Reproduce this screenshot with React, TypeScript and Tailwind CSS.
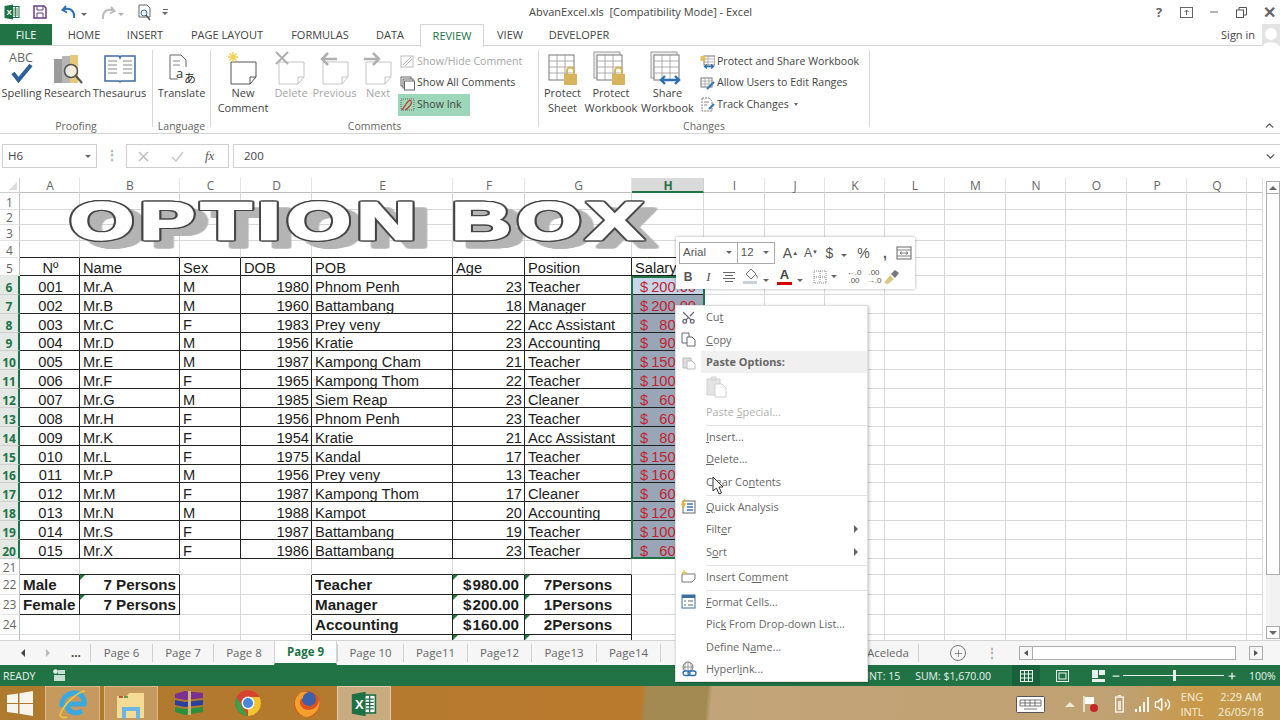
import { ReactNode } from "react";
import { Scissors, ChevronUp, ChevronDown, Plus, Minus, Volume2 } from "lucide-react";

const people: [string, string, string, number, string, number, string, number][] = [
  ["001", "Mr.A", "M", 1980, "Phnom Penh", 23, "Teacher", 200],
  ["002", "Mr.B", "M", 1960, "Battambang", 18, "Manager", 200],
  ["003", "Mr.C", "F", 1983, "Prey veny", 22, "Acc Assistant", 80],
  ["004", "Mr.D", "M", 1956, "Kratie", 23, "Accounting", 90],
  ["005", "Mr.E", "M", 1987, "Kampong Cham", 21, "Teacher", 150],
  ["006", "Mr.F", "F", 1965, "Kampong Thom", 22, "Teacher", 100],
  ["007", "Mr.G", "M", 1985, "Siem Reap", 23, "Cleaner", 60],
  ["008", "Mr.H", "F", 1956, "Phnom Penh", 23, "Teacher", 60],
  ["009", "Mr.K", "F", 1954, "Kratie", 21, "Acc Assistant", 80],
  ["010", "Mr.L", "F", 1975, "Kandal", 17, "Teacher", 150],
  ["011", "Mr.P", "M", 1956, "Prey veny", 13, "Teacher", 160],
  ["012", "Mr.M", "F", 1987, "Kampong Thom", 17, "Cleaner", 60],
  ["013", "Mr.N", "M", 1988, "Kampot", 20, "Accounting", 120],
  ["014", "Mr.S", "F", 1987, "Battambang", 19, "Teacher", 100],
  ["015", "Mr.X", "F", 1986, "Battambang", 23, "Teacher", 60],
];

const headers = ["Nº", "Name", "Sex", "DOB", "POB", "Age", "Position", "Salary"];
const columns = ["A", "B", "C", "D", "E", "F", "G", "H", "I", "J", "K", "L", "M", "N", "O", "P", "Q", ""];
const rowNumbers = Array.from({ length: 25 }, (_, i) => i + 1);

const totals: Record<number, [string, string, string]> = {
  22: ["Teacher", "$ 980.00", "7Persons"],
  23: ["Manager", "$ 200.00", "1Persons"],
  24: ["Accounting", "$ 160.00", "2Persons"],
};

function inBox(r: number, c: number) {
  if (r >= 5 && r <= 20 && c <= 7) return true;
  if ((r === 22 || r === 23) && c <= 1) return true;
  if (r >= 22 && r <= 25 && c >= 4 && c <= 6) return true;
  return false;
}

const Corner = () => (
  <span className="absolute left-0 top-0 w-[5px] h-[5px] bg-[#1f7a3c] [clip-path:polygon(0_0,100%_0,0_100%)]" />
);

function Cell({ r, c }: { r: number; c: number }) {
  const right = inBox(r, c) || inBox(r, c + 1);
  const bottom = inBox(r, c) || inBox(r + 1, c);
  let body: ReactNode = null;
  let align = "pl-[3px]";
  let extra = "";

  if (r === 5 && c <= 7) {
    body = headers[c];
    if (c === 0) align = "justify-center pl-[2px]";
  }
  if (r >= 6 && r <= 20 && c <= 7) {
    const p = people[r - 6];
    if (c === 0) align = "justify-center pl-[2px]";
    if (c === 3 || c === 5) align = "justify-end pr-[2px]";
    if (c === 7) {
      align = "justify-between pl-[8px] pr-[7px]";
      extra = (r === 6 ? "bg-[#c6d7ec]" : "bg-[#98a6b8]") + " text-[#c41f2e]";
      body = (
        <>
          <span>$</span>
          <span>{p[7]}.00</span>
        </>
      );
    } else {
      body = p[c];
    }
  }
  if ((r === 22 || r === 23) && c === 0) {
    body = r === 22 ? "Male" : "Female";
    extra = "font-bold text-[15.2px]";
  }
  if ((r === 22 || r === 23) && c === 1) {
    body = (
      <>
        <Corner />7 Persons
      </>
    );
    align = "justify-end pr-[3px]";
    extra = "font-bold text-[15.2px]";
  }
  if (r === 25 && (c === 5 || c === 6)) body = <Corner />;
  if (totals[r] && c >= 4 && c <= 6) {
    extra = "font-bold text-[15.2px]";
    body = totals[r][c - 4];
    if (c === 5) {
      body = (
        <>
          <Corner />
          <span className="[word-spacing:-3px]">{body}</span>
        </>
      );
      align = "justify-end pr-[5px]";
    }
    if (c === 6) {
      body = (
        <>
          <Corner />
          {body}
        </>
      );
      align = "justify-center";
    }
  }

  return (
    <div
      className={`relative flex whitespace-nowrap border-r border-b text-[14.67px] leading-[14px] text-[#1d1d1d] font-['Liberation_Sans',sans-serif] ${
        r >= 22 ? "items-center pt-[2px]" : "items-end"
      } ${right ? "border-r-[#222]" : "border-r-[#d8d8d8]"} ${bottom ? "border-b-[#222]" : "border-b-[#d8d8d8]"} ${align} ${extra}`}
    >
      {body}
    </div>
  );
}

// ---- small drawn icons ----

const ExcelLogo = ({ size = 16 }: { size?: number }) => (
  <svg width={size} height={size} viewBox="0 0 16 16">
    <rect x="7" y="2.5" width="8" height="11" fill="#fff" stroke="#1e7145" />
    <path d="M9 5h5M9 7h5M9 9h5M9 11h5M11.5 3v10" stroke="#1e7145" strokeWidth="0.8" />
    <path d="M0.5 2 9 0.5v15L0.5 14z" fill="#1e7145" />
    <text x="2.4" y="11" fontSize="8" fontWeight="700" fill="#fff" fontFamily="Liberation Sans">X</text>
  </svg>
);

const Note = ({ color = "#555", children }: { color?: string; children?: ReactNode }) => (
  <svg width="36" height="36" viewBox="0 0 36 36" fill="none">
    <path d="M6 12h25v15l-6 7H6z" fill="#fff" stroke={color} />
    <path d="M31 27h-6v7" stroke={color} />
    {children}
  </svg>
);

const SheetLock = ({ share, back }: { share?: boolean; back?: boolean }) => (
  <svg width="36" height="36" viewBox="0 0 36 36" fill="none">
    {back && <rect x="1" y="2" width="26" height="26" fill="#eee" stroke="#999" />}
    <rect x="4" y="5" width="25" height="25" fill="#fff" stroke="#777" />
    <path d="M4 11h25M4 17h25M4 23h25M12 5v25M20 5v25" stroke="#999" strokeWidth="0.8" />
    {share ? (
      <path d="M12 30h16M15 26l-4 4 4 4M25 26l4 4-4 4" stroke="#2f6fb0" strokeWidth="2.4" />
    ) : (
      <>
        <rect x="19" y="24" width="13" height="11" fill="#d9b35c" />
        <path d="M22 24v-3a3.5 3.5 0 0 1 7 0v3" stroke="#d9b35c" strokeWidth="2" />
      </>
    )}
  </svg>
);

function SmallGlyph({ kind }: { kind: string }) {
  if (kind === "hide")
    return (
      <svg width="15" height="15" viewBox="0 0 15 15" fill="none" stroke="#bbb">
        <rect x="1" y="2" width="12" height="11" />
        <path d="M3 11l8-8M5 12l7-7" />
      </svg>
    );
  if (kind === "all")
    return (
      <svg width="15" height="15" viewBox="0 0 15 15" fill="#fff" stroke="#666">
        <rect x="1" y="1" width="10" height="9" />
        <rect x="3" y="3" width="10" height="9" />
        <rect x="4.5" y="5" width="10" height="9" />
      </svg>
    );
  if (kind === "ink")
    return (
      <svg width="15" height="15" viewBox="0 0 15 15" fill="none">
        <rect x="1" y="2" width="13" height="11" stroke="#666" strokeDasharray="1 1" />
        <path d="M2 13C5 9 9 1 11 4s-4 8-6 9" stroke="#c0392b" strokeWidth="1.2" />
      </svg>
    );
  if (kind === "share")
    return (
      <svg width="15" height="15" viewBox="0 0 15 15" fill="none">
        <rect x="4" y="2" width="11" height="9" fill="#fff" stroke="#777" />
        <path d="M4 5h11M4 8h11M8 2v9" stroke="#999" strokeWidth="0.7" />
        <rect x="0.5" y="2" width="5" height="5" fill="#e2bf64" />
        <path d="M5 12.5h8M7 10.5l-2.5 2 2.5 2M11 10.5l2.5 2-2.5 2" stroke="#2f6fb0" strokeWidth="1.3" />
      </svg>
    );
  if (kind === "edit")
    return (
      <svg width="15" height="15" viewBox="0 0 15 15" fill="none">
        <rect x="1" y="2" width="11" height="9" fill="#fff" stroke="#777" />
        <path d="M1 5h11M1 8h11M5 2v9M9 2v9" stroke="#999" strokeWidth="0.7" />
        <path d="M14 6l-7 7" stroke="#3c78b4" strokeWidth="2.2" />
      </svg>
    );
  return (
    <svg width="15" height="15" viewBox="0 0 15 15" fill="none">
      <path d="M2 1h7l3 3v10H2z" fill="#fff" stroke="#777" strokeDasharray="2 1" />
      <path d="M4 5h5M4 8h3" stroke="#888" />
      <path d="M14 7l-5 5" stroke="#3c78b4" strokeWidth="2.2" />
    </svg>
  );
}

// ---- ribbon parts ----

function BigBtn({ w, label, icon, off }: { w: number; label: ReactNode; icon: ReactNode; off?: boolean }) {
  return (
    <div
      style={{ width: w }}
      className={`flex flex-col items-center text-center leading-[15px] ${off ? "text-[#a6a6a6]" : "text-[#444]"}`}
    >
      <div className="h-[35px] flex items-center justify-center">{icon}</div>
      <div>{label}</div>
    </div>
  );
}

function SmallBtn({ kind, label, off, active, caret }: { kind: string; label: string; off?: boolean; active?: boolean; caret?: boolean }) {
  return (
    <div
      className={`h-[21.5px] flex items-center gap-[2px] pl-[2px] whitespace-nowrap text-[10.6px] ${off ? "text-[#a6a6a6]" : "text-[#444]"} ${
        active ? "bg-[#9dd6b9] w-[72px]" : ""
      }`}
    >
      <SmallGlyph kind={kind} />
      {label}
      {caret && <span className="ml-[3px] w-0 h-0 border-x-[2.5px] border-x-transparent border-t-[3px] border-t-[#666]" />}
    </div>
  );
}

function Group({ w, label, children }: { w: number; label: string; children: ReactNode }) {
  return (
    <div style={{ width: w }} className="flex flex-col h-[77px] mt-[4px] border-r border-[#d8d8d8]">
      <div className="flex h-[69px] shrink-0">{children}</div>
      <div className="shrink-0 text-center text-[10.5px] leading-[14px] text-[#666] whitespace-nowrap">{label}</div>
    </div>
  );
}

function Ribbon() {
  return (
    <div className="h-[88px] flex border-b border-[#d4d4d4] text-[11px] shrink-0 relative">
      <Group w={153} label="Proofing">
        <BigBtn
          w={43}
          label="Spelling"
          icon={
            <svg width="34" height="35" viewBox="0 0 34 35" fill="none">
              <text x="4" y="12" fontSize="12.5" fill="#666" fontFamily="Open Sans">ABC</text>
              <path d="M8 23l5.500 7L26 15" stroke="#2c5f9e" strokeWidth="4" />
            </svg>
          }
        />
        <BigBtn
          w={49}
          label="Research"
          icon={
            <svg width="34" height="35" viewBox="0 0 34 35" fill="none">
              <rect x="3" y="9" width="8" height="24" fill="#9b9b9b" />
              <rect x="11" y="6" width="8" height="27" fill="#b5b5b5" />
              <rect x="19" y="5" width="8" height="28" fill="#e7c77a" />
              <circle cx="20" cy="21" r="6.5" fill="#fff" fillOpacity=".7" stroke="#555" strokeWidth="1.6" />
              <path d="M25 26l6 7" stroke="#555" strokeWidth="2.2" />
            </svg>
          }
        />
        <BigBtn
          w={55}
          label="Thesaurus"
          icon={
            <svg width="32" height="35" viewBox="0 0 32 35" fill="none">
              <path d="M1 6h14l1 2 1-2h14v25H17l-1 1-1-1H1z" fill="#fff" stroke="#3e6e9f" strokeWidth="1.5" />
              <path d="M4 11h9M4 15h9M4 19h9M4 23h9M19 11h9M19 15h9M19 19h9M19 23h9" stroke="#888" />
            </svg>
          }
        />
      </Group>
      <Group w={58} label="Language">
        <BigBtn
          w={58}
          label="Translate"
          icon={
            <svg width="30" height="35" viewBox="0 0 30 35" fill="none">
              <path d="M3 5h11l5 5v7" stroke="#666" />
              <path d="M3 5v24h8" stroke="#666" />
              <path d="M6 11h7M6 15h7" stroke="#888" />
              <text x="9" y="28" fontSize="13" fill="#333" fontFamily="Open Sans">a</text>
              <text x="17" y="33" fontSize="12" fill="#333" fontFamily="Noto Sans CJK JP">あ</text>
            </svg>
          }
        />
      </Group>
      <Group w={328} label="Comments">
        <div className="w-[7px]" />
        <BigBtn
          w={50}
          label={
            <>
              New
              <br />
              Comment
            </>
          }
          icon={
            <Note>
              <path d="M8 2v10M3 7h10M4.500 3.500l7 7M11.500 3.500l-7 7" stroke="#f0cf53" strokeWidth="1.5" />
            </Note>
          }
        />
        <BigBtn
          w={46}
          off
          label="Delete"
          icon={
            <Note color="#c4c4c4">
              <path d="M3 2l12 12M15 2L3 14" stroke="#b0b0b0" strokeWidth="2" />
            </Note>
          }
        />
        <BigBtn
          w={41}
          off
          label="Previous"
          icon={
            <Note color="#c4c4c4">
              <path d="M20 9H5M11 3L5 9l6 6" stroke="#b0b0b0" strokeWidth="2.5" />
            </Note>
          }
        />
        <BigBtn
          w={46}
          off
          label="Next"
          icon={
            <Note color="#c4c4c4">
              <path d="M4 9h15M13 3l6 6-6 6" stroke="#b0b0b0" strokeWidth="2.5" />
            </Note>
          }
        />
        <div className="flex flex-col pt-px -ml-[3px]">
          <SmallBtn kind="hide" label="Show/Hide Comment" off />
          <SmallBtn kind="all" label="Show All Comments" />
          <SmallBtn kind="ink" label="Show Ink" active />
        </div>
      </Group>
      <Group w={331} label="Changes">
        <BigBtn
          w={47}
          label={
            <>
              Protect
              <br />
              Sheet
            </>
          }
          icon={<SheetLock />}
        />
        <BigBtn
          w={50}
          label={
            <>
              Protect
              <br />
              Workbook
            </>
          }
          icon={<SheetLock back />}
        />
        <BigBtn
          w={63}
          label={
            <>
              Share
              <br />
              Workbook
            </>
          }
          icon={<SheetLock share back />}
        />
        <div className="flex flex-col pt-px -ml-[1px]">
          <SmallBtn kind="share" label="Protect and Share Workbook" />
          <SmallBtn kind="edit" label="Allow Users to Edit Ranges" />
          <SmallBtn kind="track" label="Track Changes" caret />
        </div>
      </Group>
      <div className="flex-1" />
      <ChevronUp size={13} className="absolute right-[4px] bottom-[1px] text-[#555]" strokeWidth={2.5} />
    </div>
  );
}

// ---- context menu ----

const MenuRow = ({ icon, children, arrow, off }: { icon?: ReactNode; children: ReactNode; arrow?: boolean; off?: boolean }) => (
  <div className={`h-[22.5px] flex items-center ${off ? "text-[#b0b0b0]" : "text-[#666]"}`}>
    <div className="w-[25px] flex justify-center">{icon}</div>
    <div className="pl-[5px] flex-1">{children}</div>
    {arrow && <span className="mr-[9px] w-0 h-0 border-y-[4px] border-y-transparent border-l-[4px] border-l-[#666]" />}
  </div>
);

const Sep = () => <div className="h-[2.5px] ml-[30px] border-b border-[#e2e2e2]" />;

function ContextMenu() {
  return (
    <div className="absolute left-[675px] top-[305px] w-[193px] h-[377px] bg-white border border-[#e0e0e0] shadow-[1px_1px_3px_rgba(0,0,0,0.25)] text-[10.9px] z-20">
      <MenuRow icon={<Scissors size={15} className="text-[#667] -rotate-90" />}>
        Cu<u>t</u>
      </MenuRow>
      <MenuRow
        icon={
          <svg width="15" height="15" viewBox="0 0 15 15" fill="#fff" stroke="#667">
            <path d="M1 1h7v10H1z" />
            <path d="M6 5h5l3 3v6H6z" />
          </svg>
        }
      >
        <u>C</u>opy
      </MenuRow>
      <MenuRow
        icon={
          <svg width="15" height="15" viewBox="0 0 15 15" fill="#fff" stroke="#bbb">
            <path d="M2 3h8v10H2z" fill="#ddd" />
            <path d="M6 6h5l3 3v5H6z" />
          </svg>
        }
      >
        <div className="-ml-[5px] pl-[5px] h-[22px] flex items-center bg-[#f0f0f0] font-bold">Paste Options:</div>
      </MenuRow>
      <div className="h-[27px] pl-[30px] flex items-center">
        <svg width="22" height="22" viewBox="0 0 22 22" fill="#e4e4e4" stroke="#d0d0d0">
          <path d="M1 3h13v16H1z" />
          <path d="M5 1h5v3H5z" />
          <path d="M9 8h7l4 4v9H9z" fill="#fff" />
        </svg>
      </div>
      <MenuRow off>
        Paste <u>S</u>pecial...
      </MenuRow>
      <Sep />
      <MenuRow>
        <u>I</u>nsert...
      </MenuRow>
      <MenuRow>
        <u>D</u>elete...
      </MenuRow>
      <MenuRow>
        Clear Co<u>n</u>tents
      </MenuRow>
      <Sep />
      <MenuRow
        icon={
          <svg width="15" height="15" viewBox="0 0 15 15" fill="none">
            <rect x="2" y="2" width="12" height="12" fill="#fff" stroke="#666" />
            <path d="M6 5h6M6 8h6M6 11h6" stroke="#3c78b4" strokeWidth="1.3" />
            <path d="M4 0L1 5h3L2 9" stroke="#e6b422" strokeWidth="1.4" />
          </svg>
        }
      >
        <u>Q</u>uick Analysis
      </MenuRow>
      <MenuRow arrow>
        Filt<u>e</u>r
      </MenuRow>
      <MenuRow arrow>
        S<u>o</u>rt
      </MenuRow>
      <Sep />
      <MenuRow
        icon={
          <svg width="15" height="15" viewBox="0 0 15 15" fill="none">
            <path d="M1 5h13v5l-3 3H1z" fill="#fff" stroke="#777" />
            <path d="M3 1v5M1 3.500h5" stroke="#e6c84a" strokeWidth="1.2" />
          </svg>
        }
      >
        Insert Co<u>m</u>ment
      </MenuRow>
      <Sep />
      <MenuRow
        icon={
          <svg width="15" height="15" viewBox="0 0 15 15" fill="none">
            <rect x="1" y="1" width="13" height="13" fill="#fff" stroke="#3c6f9f" />
            <rect x="1" y="1" width="13" height="3" fill="#3c6f9f" />
            <path d="M3 7h2M7 7h5M3 11h2M7 11h5" stroke="#666" />
          </svg>
        }
      >
        <u>F</u>ormat Cells...
      </MenuRow>
      <MenuRow>
        Pic<u>k</u> From Drop-down List...
      </MenuRow>
      <MenuRow>
        Define N<u>a</u>me...
      </MenuRow>
      <MenuRow
        icon={
          <svg width="16" height="16" viewBox="0 0 16 16" fill="none">
            <circle cx="7" cy="6" r="5" stroke="#777" />
            <path d="M2 6h10M7 1v10M4.500 2c-1 2-1 6 0 8M9.500 2c1 2 1 6 0 8" stroke="#777" strokeWidth="0.7" />
            <rect x="2" y="10" width="7" height="4.500" rx="2.200" stroke="#2f6fb0" strokeWidth="1.3" fill="#fff" />
            <rect x="7" y="10" width="8" height="4.500" rx="2.200" stroke="#2f6fb0" strokeWidth="1.3" />
          </svg>
        }
      >
        Hyperl<u>i</u>nk...
      </MenuRow>
    </div>
  );
}

// ---- mini toolbar ----

const Caret = () => <span className="inline-block w-0 h-0 border-x-[3px] border-x-transparent border-t-[3px] border-t-[#666]" />;

function MiniToolbar() {
  return (
    <div className="absolute left-[676px] top-[237px] w-[239px] h-[52px] bg-white shadow-[0_0_3px_rgba(0,0,0,0.35)] z-20 px-[3px] pt-[4px] text-[#555]">
      <div className="flex items-center h-[23px] text-[11.5px]">
        <div className="w-[60px] h-[22px] border border-[#ababab] flex items-center justify-between pl-[3px] pr-[5px] font-['Liberation_Sans',sans-serif]">
          Arial
          <Caret />
        </div>
        <div className="w-[38px] h-[22px] border border-l-0 border-[#ababab] flex items-center justify-between pl-[3px] pr-[5px] font-['Liberation_Sans',sans-serif]">
          12
          <Caret />
        </div>
        <div className="flex items-center ml-[5px] leading-[20px] font-['Liberation_Sans',sans-serif]">
          <span className="w-[21px] text-center text-[14px]">A<sup className="text-[6px]">▲</sup></span>
          <span className="w-[20px] text-center text-[12px]">A<sup className="text-[6px]">▼</sup></span>
          <span className="w-[17px] text-center text-[14px]">$</span>
          <span className="ml-[3px]"><Caret /></span>
          <span className="w-[30px] text-center text-[14px] pl-[3px]">%</span>
          <span className="w-[16px] text-center font-bold text-[14px]">,</span>
          <svg width="16" height="14" viewBox="0 0 16 14" fill="none" className="ml-[3px]" stroke="#666">
            <rect x="1" y="1" width="14" height="12" />
            <path d="M1 4h14M1 10h14M4 7h8M4 7l2-1.500M4 7l2 1.500M12 7l-2-1.500M12 7l-2 1.500" strokeWidth="0.8" />
          </svg>
        </div>
      </div>
      <div className="flex items-center h-[23px] mt-[1px] leading-[16px] font-['Liberation_Sans',sans-serif]">
        <span className="w-[20px] ml-[-1px] text-center font-bold text-[12px]">B</span>
        <span className="w-[21px] text-center italic text-[13px] font-['Liberation_Serif',serif]">I</span>
        <svg width="14" height="12" viewBox="0 0 14 12" stroke="#666" className="mx-[3px]">
          <path d="M1 1.500h12M3 4.500h8M1 7.500h12M3 10.500h8" />
        </svg>
        <svg width="18" height="17" viewBox="0 0 18 17" fill="none" className="ml-[3px]">
          <path d="M4 6l5-5 5 5-5 5z" fill="#fff" stroke="#777" />
          <path d="M14 7c1 1.500 2 2.500 1 3.500" stroke="#777" />
          <rect x="1" y="13" width="14" height="3" fill="#c8d3dd" />
        </svg>
        <span className="ml-[3px] mr-[8px]">
          <Caret />
        </span>
        <span className="w-[15px] h-[17px] text-center text-[13px] font-bold leading-[13px] border-b-[3px] border-[#d70000] text-[#444]">A</span>
        <span className="ml-[5px]">
          <Caret />
        </span>
        <svg width="14" height="14" viewBox="0 0 14 14" fill="none" stroke="#888" strokeDasharray="1 1" className="ml-[10px] mr-[4px]">
          <rect x="1" y="1" width="12" height="12" />
          <path d="M7 1v12M1 7h12" />
        </svg>
        <Caret />
        <span className="ml-[7px] w-[20px] text-[8px] leading-[8px] text-center">
          ←.0
          <br />
          .00
        </span>
        <span className="w-[20px] text-[8px] leading-[8px] text-center">
          .00
          <br />
          →.0
        </span>
        <svg width="18" height="16" viewBox="0 0 18 16" className="-ml-[1px]">
          <path d="M1 14l6-8 4 4-6 5z" fill="#d8c884" />
          <path d="M8 5l4-4 4 3-4 5z" fill="#777" />
        </svg>
      </div>
    </div>
  );
}

// ---- taskbar logos ----

const WindowsLogo = () => (
  <svg width="26" height="25" viewBox="0 0 26 25" fill="#f7f4ee">
    <path d="M0 4l11-1.500V12H0zM12.500 2.300L26 0v12H12.500zM0 13h11v9.500L0 21zM12.500 13H26v12l-13.500-2.200z" />
  </svg>
);

const IeLogo = () => (
  <svg width="30" height="30" viewBox="0 0 30 30" fill="none">
    <path d="M4 18C3 10 10 3 18 4c6 .8 9 6 8 11H9" stroke="#39a9e0" strokeWidth="5" />
    <path d="M9 17c1 6 8 9 15 5" stroke="#39a9e0" strokeWidth="5" />
    <path d="M27 2C20 3 6 14 2 26c1 3 4 3 7 2" stroke="#f0c93a" strokeWidth="1.5" />
  </svg>
);

const FolderLogo = () => (
  <svg width="30" height="30" viewBox="0 0 30 30">
    <path d="M1 6h10l2-3h15v25H1z" fill="#f5dc96" />
    <rect x="3" y="6" width="4" height="2" fill="#d24a3a" />
    <rect x="8" y="6" width="4" height="2" fill="#5aa04a" />
    <path d="M6 17h18v4H6zM6 21h4v8H6zM20 21h4v8h-4z" fill="#6cb5e4" />
  </svg>
);

const RarLogo = () => (
  <svg width="30" height="26" viewBox="0 0 30 26">
    <path d="M1 4l10-3 18 2v5L11 10 1 8z" fill="#7b2f8f" />
    <path d="M1 10l10 2 18-2v5l-18 2-10-2z" fill="#2b3f9e" />
    <path d="M1 17l10 2 18-2v5l-18 3-10-3z" fill="#2d8f3e" />
    <rect x="14" y="1" width="3" height="24" fill="#c9b57a" />
  </svg>
);

const ChromeLogo = () => (
  <svg width="28" height="28" viewBox="0 0 28 28">
    <circle cx="14" cy="14" r="13" fill="#d8432f" />
    <path d="M2.500 8 14 27a13 13 0 0 1-11.500-19z" fill="#3f9e48" />
    <path d="M14 27a13 13 0 0 0 11.500-19H14z" fill="#f2c530" />
    <circle cx="14" cy="14" r="6.500" fill="#fff" />
    <circle cx="14" cy="14" r="5" fill="#4a86d8" />
  </svg>
);

const FirefoxLogo = () => (
  <svg width="28" height="28" viewBox="0 0 28 28">
    <circle cx="14" cy="15" r="13" fill="#d9541e" />
    <circle cx="16" cy="10" r="7" fill="#3f5fa8" />
    <path d="M2 12C4 4 11 1 15 4c-3 0-5 2-5 5-3 1-4 5-2 8 3 5 10 5 15 1 2-2 3-5 3-8 2 7-2 16-12 18C8 28 1 21 2 12z" fill="#f3a02e" />
  </svg>
);

export default function App() {
  return (
    <div className="relative w-[1280px] h-[720px] overflow-hidden flex flex-col bg-white font-['Open_Sans',sans-serif] text-[#444]">
      {/* title bar */}
      <div className="h-[24px] flex items-center shrink-0 text-[11px]">
        <div className="w-[529px] flex items-center pl-[4px]">
          <ExcelLogo />
          <svg width="14" height="14" viewBox="0 0 14 14" fill="none" className="ml-[13px]">
            <path d="M1 1h10l2 2v10H1z" stroke="#6a3d86" strokeWidth="1.5" />
            <path d="M4 1v4h6V1M4 13V8h6v5" stroke="#6a3d86" />
          </svg>
          <svg width="18" height="14" viewBox="0 0 18 14" fill="none" className="ml-[14px]">
            <path d="M5 1L1.500 5 6 7.500M2 5c6-3 12 0 11 8" stroke="#2f6fb0" strokeWidth="2" />
          </svg>
          <span className="ml-[2px]">
            <Caret />
          </span>
          <svg width="16" height="13" viewBox="0 0 16 13" fill="none" className="ml-[13px]">
            <path d="M11 1l3.500 4L10 7.500M14 5C8 2 2 5 3 13" stroke="#bcbcbc" strokeWidth="2" />
          </svg>
          <span className="ml-[2px] opacity-50">
            <Caret />
          </span>
          <svg width="14" height="17" viewBox="0 0 14 17" fill="none" className="ml-[14px]" stroke="#666">
            <path d="M1 1h8l3 3v9H1z" />
            <circle cx="6" cy="9" r="3" stroke="#2f6fb0" />
            <path d="M8 11l4 5" stroke="#555" strokeWidth="1.4" />
          </svg>
          <span className="ml-[10px] flex flex-col items-center gap-[2px]">
            <span className="w-[5px] h-px bg-[#666]" />
            <Caret />
          </span>
        </div>
        <div className="text-[#444] whitespace-pre">AbvanExcel.xls  [Compatibility Mode] - Excel</div>
        <div className="ml-auto flex items-center h-full text-[#666]">
          <span className="w-[14px] leading-[18px] text-center font-bold text-[13px]">?</span>
          <svg width="13" height="11" viewBox="0 0 13 11" fill="none" stroke="#666" className="ml-[14px]">
            <rect x="0.500" y="0.500" width="12" height="10" />
            <path d="M6.500 8V3M4.500 5l2-2 2 2" />
          </svg>
          <Minus size={12} className="ml-[15px]" strokeWidth={2} />
          <svg width="11" height="11" viewBox="0 0 11 11" fill="none" stroke="#555" className="ml-[16px]">
            <rect x="0.500" y="3" width="7" height="7.500" />
            <path d="M3 3V0.500h7.500V8H8" />
          </svg>
          <span className="ml-[15px] mr-[4px] text-[16px] w-[14px] text-center font-bold leading-none">✕</span>
        </div>
      </div>

      {/* tab row */}
      <div className="h-[22px] flex items-stretch border-b border-[#d4d4d4] shrink-0 text-[11px] leading-[22px] text-center">
        <div className="w-[52px] bg-[#217346] text-white">FILE</div>
        <div className="w-[64px]">HOME</div>
        <div className="w-[58px]">INSERT</div>
        <div className="w-[106px]">PAGE LAYOUT</div>
        <div className="w-[80px]">FORMULAS</div>
        <div className="w-[60px]">DATA</div>
        <div className="w-[64px] h-[23px] bg-white border border-b-0 border-[#d4d4d4] text-[#217346]">REVIEW</div>
        <div className="w-[52px]">VIEW</div>
        <div className="w-[86px]">DEVELOPER</div>
        <div className="ml-auto flex items-center">
          <span className="mr-[7px]">Sign in</span>
          <span className="w-[18px] h-[22px] bg-[#e3e3e3] flex items-end justify-center overflow-hidden">
            <svg width="16" height="20" viewBox="0 0 16 20" fill="#fff">
              <circle cx="8" cy="8" r="6" />
              <path d="M0 20c1-5 14-5 16 0z" />
            </svg>
          </span>
        </div>
      </div>

      <Ribbon />

      {/* formula bar */}
      <div className="h-[44px] shrink-0 flex items-start pt-[10px] text-[11.5px] text-[#444]">
        <div className="w-[95px] ml-[2px] h-[24px] border border-[#cfcfcf] flex items-center justify-between px-[5px]">
          H6
          <Caret />
        </div>
        <div className="w-[29px] h-[24px] flex items-center justify-center text-[#aaa] font-bold leading-none pb-[3px]">⋮</div>
        <div className="w-[103px] h-[24px] border border-[#cfcfcf] flex items-center text-[#c0c0c0] pl-[11px]">
          <svg width="11" height="11" viewBox="0 0 11 11" stroke="#bfbfbf" strokeWidth="1.5">
            <path d="M1 1l9 9M10 1l-9 9" />
          </svg>
          <svg width="13" height="11" viewBox="0 0 13 11" stroke="#c8c8c8" strokeWidth="1.5" fill="none" className="ml-[22px]">
            <path d="M1 6l4 4 7-9" />
          </svg>
          <span className="ml-[21px] italic text-[#555] font-['Liberation_Serif',serif] text-[13px]">fx</span>
        </div>
        <div className="flex-1 ml-[4px] h-[24px] border-y border-l border-[#cfcfcf] flex items-center justify-between pl-[10px] pr-[3px]">
          200
          <ChevronDown size={13} className="text-[#555]" strokeWidth={2.5} />
        </div>
      </div>

      {/* sheet */}
      <div className="relative flex-1 flex overflow-hidden">
        <div className="grid grid-cols-[20px_60px_100px_61px_71px_141px_72px_107px_72px_61px_60px_60px_60px_61px_60px_61px_60px_60px_16px] grid-rows-[15px_17px_15px_16px_17px_18px_repeat(15,18.87px)_16px_20px_20px_20px_20px] w-[1263px]">
          <div className="border-r border-b border-[#cfcfcf] flex items-end justify-end">
            <span className="w-0 h-0 mr-[2px] mb-[2px] border-l-[8px] border-l-transparent border-b-[8px] border-b-[#dcdcdc]" />
          </div>
          {columns.map((col, i) => (
            <div
              key={i}
              className={`flex items-center justify-center pl-px pt-[2px] text-[12px] leading-[12px] font-['Open_Sans',sans-serif] border-r border-b ${
                col === "H"
                  ? "bg-[#dadada] text-[#217346] font-bold border-r-[#cfcfcf] border-b-[#217346] border-b-2"
                  : "text-[#666] border-r-[#e3e3e3] border-b-[#bdbdbd]"
              }`}
            >
              {col}
            </div>
          ))}
          {rowNumbers.map((r) => (
            <div key={r} className="contents">
              <div
                className={`flex justify-center text-[12px] leading-[13px] font-['Open_Sans',sans-serif] border-b ${
                  r >= 22 ? "items-center" : "items-end"
                } ${
                  r >= 6 && r <= 20
                    ? "bg-[#e4e9e6] text-[#217346] font-bold border-r-2 border-r-[#217346] border-b-[#cfcfcf]"
                    : "text-[#666] border-r border-r-[#bdbdbd] border-b-[#e3e3e3]"
                }`}
              >
                {r < 25 ? r : ""}
              </div>
              {columns.map((_, c) => (
                <Cell key={c} r={r} c={c} />
              ))}
            </div>
          ))}
        </div>

        {/* vertical scrollbar */}
        <div className="ml-[3px] w-[14px] flex flex-col pt-[3px] pb-[1px]">
          <div className="h-[13px] border border-[#ababab] flex items-center justify-center">
            <span className="w-0 h-0 border-x-[4px] border-x-transparent border-b-[4px] border-b-[#666]" />
          </div>
          <div className="h-[381px] border-x border-b border-[#ababab] bg-white" />
          <div className="flex-1 bg-[#f2f2f2]" />
          <div className="h-[13px] border border-[#ababab] flex items-center justify-center">
            <span className="w-0 h-0 border-x-[4px] border-x-transparent border-t-[4px] border-t-[#666]" />
          </div>
        </div>

        {/* wordart */}
        <div className="absolute left-[70px] top-[9px] origin-left scale-x-[1.57] whitespace-pre font-['Liberation_Sans',sans-serif] font-bold text-[52px] leading-[68px] tracking-[4.2px] text-white [-webkit-text-stroke:2.5px_white] [filter:drop-shadow(1px_0_0_#444)_drop-shadow(-1px_0_0_#444)_drop-shadow(0_1px_0_#444)_drop-shadow(0_-1px_0_#444)_drop-shadow(8px_7px_0_#b4b4b4)]">
          OPTION BOX
        </div>

        {/* selection outline */}
        <div className="absolute left-[631px] top-[98px] w-[74px] h-[283px] border-2 border-[#217346] pointer-events-none" />
      </div>

      {/* sheet tabs */}
      <div className="h-[25px] shrink-0 flex items-center bg-[#f6f6f6] text-[11.5px] leading-[16px] text-[#666] border-t border-[#d4d4d4]">
        <div className="w-[90px] flex items-center font-bold">
          <span className="ml-[21px] w-0 h-0 border-y-[4px] border-y-transparent border-r-[4px] border-r-[#444]" />
          <span className="ml-[21px] w-0 h-0 border-y-[4px] border-y-transparent border-l-[4px] border-l-[#bbb]" />
          <span className="ml-[21px] text-[#444]">...</span>
        </div>
        {[
          ["Page 6", "w-[62px]"],
          ["Page 7", "w-[61px]"],
          ["Page 8", "w-[61px]"],
        ].map(([t, w]) => (
          <div key={t} className={`${w} h-[18px] border-l border-[#cfcfcf] flex items-center justify-center`}>{t}</div>
        ))}
        <div className="w-[63px] h-[24px] -mt-px bg-white border-x border-[#d4d4d4] border-b-2 border-b-[#217346] text-[#217346] font-bold flex items-center justify-center">
          Page 9
        </div>
        {[
          ["Page 10", "w-[66px]"],
          ["Page11", "w-[64px]"],
          ["Page12", "w-[64px]"],
          ["Page13", "w-[65px]"],
          ["Page14", "w-[64px]"],
          ["Page15", "w-[100px]"],
        ].map(([t, w]) => (
          <div key={t} className={`${w} h-[18px] border-l border-[#cfcfcf] flex items-center justify-center`}>{t}</div>
        ))}
        <div className="w-[159px] h-[18px] border-r border-[#cfcfcf] flex items-center justify-end pr-[9px]">Aceleda</div>
        <div className="ml-[31px] w-[16px] h-[16px] rounded-full border border-[#777] flex items-center justify-center">
          <Plus size={11} strokeWidth={1.5} />
        </div>
        <span className="ml-[20px] text-[#aaa] font-bold">⋮</span>
        <div className="ml-[21px] w-[14px] h-[14px] border border-[#ababab] flex items-center justify-center">
          <span className="w-0 h-0 border-y-[3.500px] border-y-transparent border-r-[4px] border-r-[#555]" />
        </div>
        <div className="w-[203px] h-[14px] border-y border-r border-[#ababab] bg-white" />
        <div className="w-[13px] h-[14px]" />
        <div className="w-[14px] h-[14px] border border-[#ababab] flex items-center justify-center">
          <span className="w-0 h-0 border-y-[3.500px] border-y-transparent border-l-[4px] border-l-[#555]" />
        </div>
      </div>

      {/* status bar */}
      <div className="h-[21px] shrink-0 bg-[#217346] text-[#e8f2ec] text-[10.5px] leading-[14px] flex items-center">
        <span className="ml-[3px] w-[50px]">READY</span>
        <svg width="13" height="13" viewBox="0 0 13 13" fill="#e8f2ec">
          <circle cx="2.500" cy="2.500" r="2.300" />
          <path d="M5 1h7v4H5zM1 6h11v6H1z" opacity="0.85" />
        </svg>
        <div className="ml-auto flex items-center h-full">
          <span className="mr-[15px]">COUNT: 15</span>
          <span className="mr-[21px]">SUM: $1,670.00</span>
          <div className="w-[28px] h-full bg-[#19613a] flex items-center justify-center">
            <svg width="13" height="12" viewBox="0 0 13 12" fill="none" stroke="#fff" strokeWidth="0.9">
              <rect x="0.500" y="0.500" width="12" height="11" />
              <path d="M4.500 0.500v11M8.500 0.500v11M0.500 4h12M0.500 8h12" />
            </svg>
          </div>
          <svg width="13" height="12" viewBox="0 0 13 12" fill="none" stroke="#e8f2ec" className="ml-[16px]">
            <rect x="0.500" y="0.500" width="12" height="11" />
            <rect x="3" y="3" width="7" height="6" />
          </svg>
          <svg width="13" height="12" viewBox="0 0 13 12" fill="#e8f2ec" className="ml-[23px]">
            <path d="M0 0h6v8H0zM7 0h6v5H7zM0 9h13v3H0z" />
          </svg>
          <Minus size={10} strokeWidth={3} className="ml-[6px]" />
          <div className="relative w-[101px] h-px bg-[#e8f2ec] ml-[2px]">
            <span className="absolute left-[50px] -top-[5px] w-[3px] h-[11px] bg-[#e8f2ec]" />
          </div>
          <Plus size={10} strokeWidth={3} className="ml-[3px]" />
          <span className="ml-[12px] mr-[1px] w-[30px] whitespace-nowrap">100%</span>
        </div>
      </div>

      {/* taskbar */}
      <div className="h-[34px] shrink-0 flex items-center bg-[linear-gradient(95deg,#ae7a2e_0px,#ba7a2e_640px,#a38a52_645px,#a38a52_705px,#c2a479_710px,#bfa173_1120px,#c9994a_1190px,#c09a52_1280px)] overflow-hidden">
        <div className="ml-[7px] w-[38px]">
          <WindowsLogo />
        </div>
        <div className="w-[55px] h-full bg-[#c69a5e] border-x border-t border-[#d8b98c] flex items-center justify-center">
          <IeLogo />
        </div>
        <div className="ml-[4px] w-[54px] h-full bg-[#c69a5e] border-x border-t border-[#d8b98c] flex items-end justify-center">
          <FolderLogo />
        </div>
        <div className="w-[62px] flex justify-center">
          <RarLogo />
        </div>
        <div className="w-[56px] flex justify-center">
          <ChromeLogo />
        </div>
        <div className="w-[61px] flex justify-center">
          <FirefoxLogo />
        </div>
        <div className="w-[54px] h-full bg-[#c8ac80] border-x border-t border-[#e0ccab] flex items-center justify-center">
          <ExcelLogo size={26} />
        </div>
        <div className="ml-auto flex items-center text-[#f7efdc] text-[11px] leading-[15px] pt-[2px]">
          <svg width="29" height="17" viewBox="0 0 29 17" fill="#fff" stroke="#555">
            <rect x="0.500" y="0.500" width="28" height="16" rx="1" />
            <path d="M4 4h21v6H4zM9 4v6M14 4v6M19 4v6M4 7h21M8 13h13" strokeWidth="0.8" fill="none" />
          </svg>
          <span className="ml-[20px] w-0 h-0 border-x-[5px] border-x-transparent border-b-[5px] border-b-[#efe8d8]" />
          <svg width="16" height="18" viewBox="0 0 16 18" className="ml-[8px]">
            <path d="M1 1v16" stroke="#fff" strokeWidth="1.2" />
            <path d="M2 2h9v7H2z" fill="#fff" />
            <circle cx="11" cy="13" r="4" fill="#c8252b" />
          </svg>
          <svg width="9" height="18" viewBox="0 0 9 18" fill="none" stroke="#fff" strokeWidth="1.2" className="ml-[16px]">
            <rect x="0.700" y="2" width="7.500" height="15" />
            <path d="M3 0.700h3" />
            <rect x="3" y="6" width="3" height="9" fill="#fff" stroke="none" opacity="0.7" />
          </svg>
          <svg width="16" height="16" viewBox="0 0 16 16" fill="#fff" className="ml-[10px]">
            <path d="M1 13h2v3H1zM5 10h2v6H5zM9 6h2v10H9zM13 1h2v15h-2z" opacity="0.9" />
          </svg>
          <Volume2 size={17} className="ml-[4px] text-white" />
          <div className="ml-[3px] w-[36px] text-center">
            ENG
            <br />
            INTL
          </div>
          <div className="mr-[8px] w-[62px] text-center">
            2:29 AM
            <br />
            26/05/18
          </div>
        </div>
      </div>

      <MiniToolbar />
      <ContextMenu />

      {/* mouse pointer */}
      <svg width="12" height="19" viewBox="0 0 12 19" className="absolute left-[712px] top-[476px] z-30">
        <path d="M1 1v14l3.500-3 2.500 6 2.500-1-2.500-6H11z" fill="#fff" stroke="#333" />
      </svg>
    </div>
  );
}
